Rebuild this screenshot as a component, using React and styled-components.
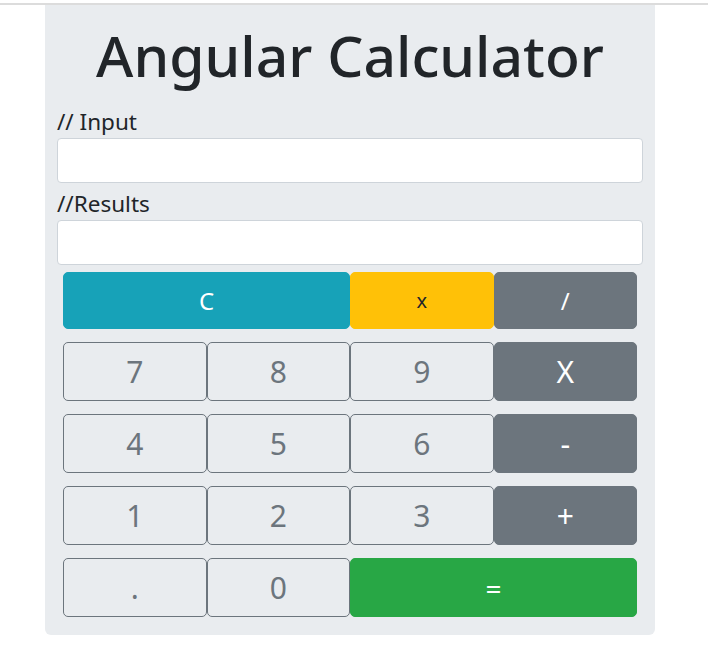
import styled, { createGlobalStyle } from "styled-components";

const GlobalStyle = createGlobalStyle`
  body {
    margin: 0;
    background: #fff;
    font-family: "Noto Sans", "Open Sans", sans-serif;
    color: #212529;
  }
`;

const TopRule = styled.div`
  margin-top: 3px;
  height: 2px;
  background: #dcdcdc;
`;

const Card = styled.div`
  width: 610px;
  margin-left: 45px;
  box-sizing: border-box;
  padding: 0 12px 18px;
  background: #e9ecef;
  border-radius: 0 0 6px 6px;
`;

const Title = styled.h1`
  margin: 0 0 13px;
  padding-top: 12px;
  text-align: center;
  font-size: 57px;
  font-weight: 500;
  line-height: 76px;
  color: #212529;
`;

const Label = styled.label`
  display: block;
  margin-bottom: 1px;
  font-size: 22.5px;
  line-height: 31px;
  color: #212529;
`;

const Field = styled.input`
  display: block;
  width: 100%;
  height: 45px;
  box-sizing: border-box;
  margin-bottom: 5px;
  border: 1px solid #ced4da;
  border-radius: 4px;
  background: #fff;
  outline: none;
`;

const Keys = styled.div`
  display: grid;
  grid-template-columns: repeat(4, 1fr);
  grid-template-rows: 57px;
  grid-auto-rows: 59px;
  row-gap: 13px;
  margin: 0 6px;
  padding-top: 2px;
`;

const palette = {
  info: ["#17a2b8", "#fff"],
  warning: ["#ffc107", "#212529"],
  secondary: ["#6c757d", "#fff"],
  success: ["#28a745", "#fff"],
  outline: ["transparent", "#6c757d"],
};

const Key = styled.button`
  grid-column: span ${(p) => p.$span || 1};
  border: 1px solid ${(p) => (p.$kind === "outline" ? "#6c757d" : palette[p.$kind][0])};
  border-radius: 5px;
  background: ${(p) => palette[p.$kind][0]};
  color: ${(p) => palette[p.$kind][1]};
  font-family: "Noto Sans", "Open Sans", sans-serif;
  font-size: ${(p) => p.$size || 30}px;
  line-height: 1;
  padding: 0;
  cursor: pointer;
`;

const keys = [
  { t: "C", kind: "info", span: 2, size: 24 },
  { t: "x", kind: "warning", size: 20 },
  { t: "/", kind: "secondary", size: 24 },
  { t: "7", kind: "outline" },
  { t: "8", kind: "outline" },
  { t: "9", kind: "outline" },
  { t: "X", kind: "secondary" },
  { t: "4", kind: "outline" },
  { t: "5", kind: "outline" },
  { t: "6", kind: "outline" },
  { t: "-", kind: "secondary" },
  { t: "1", kind: "outline" },
  { t: "2", kind: "outline" },
  { t: "3", kind: "outline" },
  { t: "+", kind: "secondary", size: 30 },
  { t: ".", kind: "outline" },
  { t: "0", kind: "outline" },
  { t: "=", kind: "success", span: 2, size: 28 },
];

export default function App() {
  return (
    <>
      <GlobalStyle />
      <TopRule />
      <Card>
        <Title>Angular Calculator</Title>
        <Label>// Input</Label>
        <Field type="text" />
        <Label>//Results</Label>
        <Field type="text" />
        <Keys>
          {keys.map((k) => (
            <Key key={k.t} $kind={k.kind} $span={k.span} $size={k.size}>
              {k.t}
            </Key>
          ))}
        </Keys>
      </Card>
    </>
  );
}
